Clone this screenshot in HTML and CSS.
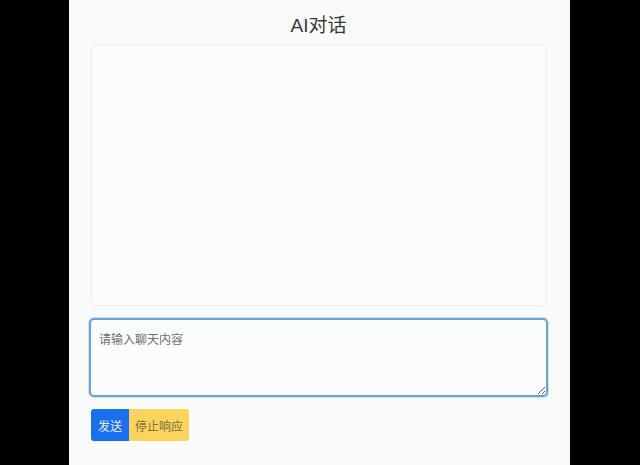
FILE: index.html
```html
<!DOCTYPE html>
<html lang="zh">
<head>
<meta charset="utf-8">
<title>AI对话</title>
<link rel="stylesheet" href="styles.css">
</head>
<body>
<div class="panel">
  <h1 class="title">AI对话</h1>
  <div class="chat-box"></div>
  <textarea class="input" placeholder="请输入聊天内容"></textarea>
  <div class="actions">
    <button class="btn btn-send">发送</button>
    <button class="btn btn-stop">停止响应</button>
  </div>
</div>
</body>
</html>
```
FILE: styles.css
```css
html, body {
  margin: 0;
  padding: 0;
  background: #000;
  height: 100%;
}
body {
  font-family: "Liberation Sans", "Noto Sans CJK SC", sans-serif;
}
.panel {
  margin-left: 69px;
  width: 501px;
  height: 465px;
  background: #f9fafa;
  box-sizing: border-box;
  padding: 0 22px 0 20px;
  display: flex;
  flex-direction: column;
}
.title {
  margin: 12px 0 0;
  height: 33px;
  font-size: 19px;
  font-weight: normal;
  color: #3a3a3a;
  text-align: center;
  line-height: 28px;
}
.chat-box {
  margin: 0 2px;
  height: 259px;
  border: 1px solid #eceeef;
  border-radius: 3px;
  background: #fbfcfc;
}
.input {
  margin-top: 12px;
  height: 79px;
  box-sizing: border-box;
  border: 2px solid #6aa3dc;
  border-radius: 5px;
  background: #fbfcfc;
  padding: 10px 8px;
  font-family: "Liberation Sans", "Noto Sans CJK SC", sans-serif;
  font-size: 12px;
  color: #333;
  resize: vertical;
  outline: none;
  box-shadow: 0 0 0 1px rgba(120, 170, 220, 0.35);
}
.input::placeholder {
  color: #6f6f6f;
}
.actions {
  margin: 12px 2px 0;
  display: flex;
}
.btn {
  height: 32px;
  border: none;
  font-family: "Liberation Sans", "Noto Sans CJK SC", sans-serif;
  font-size: 12px;
  white-space: nowrap;
  cursor: pointer;
}
.btn-send {
  padding: 0 7px;
  background: #1a6ff0;
  color: #e9f0ff;
  border-radius: 3px 0 0 3px;
}
.btn-stop {
  padding: 0 6px;
  background: #fad45c;
  color: #7a6a3c;
  border-radius: 0 3px 3px 0;
}
```
